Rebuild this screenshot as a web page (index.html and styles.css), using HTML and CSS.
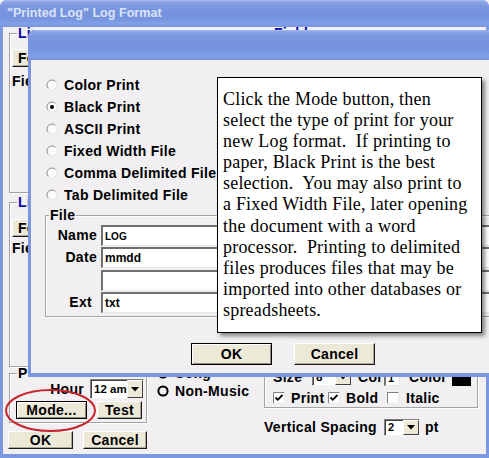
FILE: index.html
```html
<!DOCTYPE html>
<html lang="en">
<head>
<meta charset="utf-8">
<title>"Printed Log" Log Format</title>
<link rel="stylesheet" href="styles.css">
</head>
<body>
<div class="screen">
  <div class="outer">
    <div class="titlebar"><span class="title">"Printed Log" Log Format</span></div>
    <div class="outer-body">
      <div class="col-left">
        <fieldset class="grp g1">
          <legend class="blue">Lines</legend>
          <div class="btn strip-btn b-fonts1">Fonts</div>
          <div class="lbl l-fields1">Fields</div>
        </fieldset>
        <fieldset class="grp g2">
          <legend class="blue">Lines</legend>
          <div class="btn strip-btn b-fonts2">Fonts</div>
          <div class="lbl l-fields2">Fields</div>
        </fieldset>
        <fieldset class="grp g3">
          <legend>P</legend>
          <div class="hour-row">
            <span class="lbl">Hour</span>
            <div class="select hour-sel">
              <span class="sel-val">12 am</span>
              <span class="sel-btn"><svg viewBox="0 0 8 5" width="8" height="5"><path d="M0 0H8L4 4.5Z" fill="#000"/></svg></span>
            </div>
          </div>
          <div class="mode-row">
            <div class="btn def mode-btn">Mode...</div>
            <div class="btn test-btn">Test</div>
          </div>
        </fieldset>
        <div class="foot-row">
          <div class="btn foot-ok">OK</div>
          <div class="btn foot-cancel">Cancel</div>
        </div>
      </div>
      <div class="col-mid">
        <div class="orad"><svg viewBox="0 0 12 12" width="12" height="12"><circle cx="6" cy="6" r="4.6" fill="none" stroke="#000" stroke-width="2"/></svg><span>Music</span></div>
        <div class="orad"><svg viewBox="0 0 12 12" width="12" height="12"><circle cx="6" cy="6" r="4.6" fill="none" stroke="#000" stroke-width="2"/></svg><span>Song</span></div>
        <div class="orad"><svg viewBox="0 0 12 12" width="12" height="12"><circle cx="6" cy="6" r="4.6" fill="none" stroke="#000" stroke-width="2"/></svg><span>Non-Music</span></div>
      </div>
      <div class="col-right">
        <fieldset class="grp gr">
          <legend class="blue">Fields</legend>
          <div class="size-row">
            <span class="w-size">Size</span>
            <div class="select size-sel">
              <span class="sel-val">8</span>
              <span class="sel-btn"><svg viewBox="0 0 8 5" width="8" height="5"><path d="M0 0H8L4 4.5Z" fill="#000"/></svg></span>
            </div>
            <span class="w-col">Col</span>
            <div class="field col-field">1</div>
            <span class="w-color">Color</span>
            <div class="swatch"></div>
          </div>
          <div class="chk-row">
            <svg class="cb" viewBox="0 0 12 12" width="12" height="12"><rect x="0" y="0" width="12" height="12" fill="#fff"/><path d="M0.5 11.5V0.5H11.5" fill="none" stroke="#808080"/><path d="M0.5 11.5H11.5V0.5" fill="none" stroke="#e8e8e8"/><path d="M2.5 5.5L4.8 7.8L9.5 3" fill="none" stroke="#000" stroke-width="1.8"/></svg>
            <span class="w-print">Print</span>
            <svg class="cb" viewBox="0 0 12 12" width="12" height="12"><rect x="0" y="0" width="12" height="12" fill="#fff"/><path d="M0.5 11.5V0.5H11.5" fill="none" stroke="#808080"/><path d="M0.5 11.5H11.5V0.5" fill="none" stroke="#e8e8e8"/><path d="M2.5 5.5L4.8 7.8L9.5 3" fill="none" stroke="#000" stroke-width="1.8"/></svg>
            <span class="w-bold">Bold</span>
            <svg class="cb" viewBox="0 0 12 12" width="12" height="12"><rect x="0" y="0" width="12" height="12" fill="#fff"/><path d="M0.5 11.5V0.5H11.5" fill="none" stroke="#808080"/><path d="M0.5 11.5H11.5V0.5" fill="none" stroke="#e8e8e8"/></svg>
            <span class="w-italic">Italic</span>
          </div>
        </fieldset>
        <div class="vs-row">
          <span class="w-vs">Vertical Spacing</span>
          <div class="select vs-sel">
            <span class="sel-val">2</span>
            <span class="sel-btn"><svg viewBox="0 0 8 5" width="8" height="5"><path d="M0 0H8L4 4.5Z" fill="#000"/></svg></span>
          </div>
          <span class="w-pt">pt</span>
        </div>
      </div>
    </div>
  </div>

  <div class="dlg">
    <div class="dlg-title"></div>
    <div class="dlg-body">
      <div class="iradio"><svg class="rb" viewBox="0 0 12 12" width="12" height="12"><circle cx="6" cy="6" r="5" fill="#fbfbfb"/><path d="M2.46 9.54A5 5 0 0 1 9.54 2.46" fill="none" stroke="#8a8a8a"/><path d="M9.54 2.46A5 5 0 0 1 2.46 9.54" fill="none" stroke="#e4e4e4"/></svg><span>Color Print</span></div>
      <div class="iradio"><svg class="rb" viewBox="0 0 12 12" width="12" height="12"><circle cx="6" cy="6" r="5" fill="#fbfbfb"/><path d="M2.46 9.54A5 5 0 0 1 9.54 2.46" fill="none" stroke="#8a8a8a"/><path d="M9.54 2.46A5 5 0 0 1 2.46 9.54" fill="none" stroke="#e4e4e4"/><circle cx="6" cy="6" r="2" fill="#000"/></svg><span>Black Print</span></div>
      <div class="iradio"><svg class="rb" viewBox="0 0 12 12" width="12" height="12"><circle cx="6" cy="6" r="5" fill="#fbfbfb"/><path d="M2.46 9.54A5 5 0 0 1 9.54 2.46" fill="none" stroke="#8a8a8a"/><path d="M9.54 2.46A5 5 0 0 1 2.46 9.54" fill="none" stroke="#e4e4e4"/></svg><span>ASCII Print</span></div>
      <div class="iradio"><svg class="rb" viewBox="0 0 12 12" width="12" height="12"><circle cx="6" cy="6" r="5" fill="#fbfbfb"/><path d="M2.46 9.54A5 5 0 0 1 9.54 2.46" fill="none" stroke="#8a8a8a"/><path d="M9.54 2.46A5 5 0 0 1 2.46 9.54" fill="none" stroke="#e4e4e4"/></svg><span>Fixed Width File</span></div>
      <div class="iradio"><svg class="rb" viewBox="0 0 12 12" width="12" height="12"><circle cx="6" cy="6" r="5" fill="#fbfbfb"/><path d="M2.46 9.54A5 5 0 0 1 9.54 2.46" fill="none" stroke="#8a8a8a"/><path d="M9.54 2.46A5 5 0 0 1 2.46 9.54" fill="none" stroke="#e4e4e4"/></svg><span>Comma Delimited File</span></div>
      <div class="iradio"><svg class="rb" viewBox="0 0 12 12" width="12" height="12"><circle cx="6" cy="6" r="5" fill="#fbfbfb"/><path d="M2.46 9.54A5 5 0 0 1 9.54 2.46" fill="none" stroke="#8a8a8a"/><path d="M9.54 2.46A5 5 0 0 1 2.46 9.54" fill="none" stroke="#e4e4e4"/></svg><span>Tab Delimited File</span></div>

      <fieldset class="grp gfile">
        <legend>File</legend>
        <div class="file-grid">
          <span class="flab">Name</span><div class="field ffield small-caps">LOG</div>
          <span class="flab">Date</span><div class="field ffield">mmdd</div>
          <span class="flab"></span><div class="field ffield"></div>
          <span class="flab lab-ext">Ext</span><div class="field ffield">txt</div>
        </div>
      </fieldset>

      <div class="dlg-buttons">
        <div class="btn def dlg-btn">OK</div>
        <div class="btn dlg-btn">Cancel</div>
      </div>
    </div>
  </div>

  <div class="tip"><p class="tip-text">Click the Mode button, then
select the type of print for your
new Log format.  If printing to
paper, Black Print is the best
selection.  You may also print to
a Fixed Width File, later opening
the document with a word
processor.  Printing to delimited
files produces files that may be
imported into other databases or
spreadsheets.</p></div>

  <svg class="ring" viewBox="0 0 93 46" width="93" height="46"><ellipse cx="45.5" cy="22.5" rx="44.5" ry="20.5" fill="none" stroke="#c4262c" stroke-width="2"/></svg>
</div>
</body>
</html>
```

FILE: styles.css
```css
* { box-sizing: border-box; }
html, body { margin: 0; padding: 0; }
body {
  width: 489px;
  height: 458px;
  overflow: hidden;
  background: #f1eff2;
  font-family: "Liberation Sans", Arial, sans-serif;
  font-weight: bold;
  font-size: 14px;
  letter-spacing: 0.3px;
  color: #000;
}
.screen { position: relative; width: 489px; height: 458px; overflow: hidden; }

/* ---------- outer window ---------- */
.outer {
  width: 489px;
  height: 458px;
  display: flex;
  flex-direction: column;
  background: #7b97e0;
  border-radius: 7px 7px 0 0;
}
.titlebar {
  height: 27px;
  flex: none;
  display: flex;
  align-items: center;
  padding-left: 7px;
  border-radius: 7px 7px 0 0;
  background: linear-gradient(to bottom, #aabdf0 0px, #8ba4e6 2px, #7c97e0 6px, #7592dd 14px, #7794df 19px, #7fa0e8 23px, #7b97e0 27px);
}
.title { color: #dbe4f8; font-size: 12.6px; font-weight: bold; letter-spacing: 0; padding-bottom: 1px; }
.outer-body {
  flex: 1;
  margin: 0 3px 4px 3px;
  background: #f1eff2;
  display: flex;
  padding-left: 6px;
}

.grp {
  margin: 0;
  padding: 0 2px;
  min-width: 0;
  border: 1px solid #a3a3a6;
  box-shadow: 1px 1px 0 #fff, inset 1px 1px 0 #fff;
}
.grp legend {
  font-size: 14px;
  line-height: 12px;
  padding: 0 1px;
  margin-left: 5px;
}
.blue { color: #0c0ca4; }

.col-left { width: 138px; flex: none; display: flex; flex-direction: column; }
.g1 { height: 166px; }
.g2 { height: 171px; margin-top: 3px; }
.g3 { height: 56px; }
.g3 legend { margin-left: 5px; }

.btn {
  display: flex;
  align-items: center;
  justify-content: center;
  background: #ece9d8;
  border: 1px solid;
  border-color: #ffffff #1a1a1a #1a1a1a #ffffff;
  box-shadow: inset -1px -1px 0 #aca899;
  font-weight: bold;
  font-size: 14px;
  white-space: nowrap;
}
.btn.def {
  border-color: #000;
  box-shadow: inset 1px 1px 0 #fff, inset -1px -1px 0 #8f8c80;
}
.strip-btn { width: 60px; height: 18px; justify-content: flex-start; padding-left: 5px; }
.b-fonts1 { margin-top: 10px; }
.b-fonts2 { margin-top: 11px; }
.lbl { line-height: 16px; }
.l-fields1 { margin-top: 6px; }
.l-fields2 { margin-top: 3px; }

.hour-row {
  height: 20px;
  display: flex;
  align-items: center;
  justify-content: flex-end;
  padding-right: 0;
}
.hour-row .lbl { margin-right: 6px; }
.select {
  display: flex;
  background: #fff;
  border: 1px solid;
  border-color: #7f7f7f #f4f4f4 #f4f4f4 #7f7f7f;
  box-shadow: inset 1px 1px 0 #404040;
}
.sel-val {
  flex: 1;
  display: flex;
  align-items: center;
  padding-left: 3px;
  font-size: 11.5px;
  letter-spacing: 0;
}
.sel-btn {
  width: 16px;
  display: flex;
  align-items: center;
  justify-content: center;
  background: #ece9d8;
  border: 1px solid;
  border-color: #fff #404040 #404040 #fff;
}
.hour-sel { width: 54px; height: 20px; }

.mode-row { height: 18px; margin-top: 2px; display: flex; gap: 10px; padding-left: 4px; }
.mode-btn { width: 71px; height: 18px; }
.test-btn { width: 45px; height: 18px; }

.foot-row { margin-top: 8px; display: flex; gap: 10px; margin-left: -1px; }
.foot-ok { width: 65px; height: 18px; }
.foot-cancel { width: 64px; height: 18px; }

.col-mid { width: 98px; flex: none; margin-left: 10px; padding-top: 319px; }
.orad { height: 18px; display: flex; align-items: center; gap: 6px; }

.col-right { width: 214px; flex: none; margin-left: 9px; }
.gr {
  height: 381px;
  display: flex;
  flex-direction: column;
  justify-content: flex-end;
  padding-bottom: 1px;
}
.gr legend { margin-left: 6px; }
.size-row { height: 20px; margin-bottom: 3px; display: flex; align-items: center; padding-left: 6px; }
.w-size { width: 39px; }
.size-sel { width: 40px; height: 18px; }
.w-col { width: 26px; margin-left: 6px; }
.field {
  background: #fff;
  border-style: solid;
  border-width: 2px 1px 1px 2px;
  border-color: #707070 #e6e6e6 #e6e6e6 #707070;
  display: flex;
  align-items: center;
  padding-left: 2px;
  font-size: 12px;
  letter-spacing: 0;
}
.col-field { width: 16px; height: 18px; font-size: 11px; }
.w-color { width: 43px; margin-left: 9px; }
.swatch { width: 19px; height: 14px; background: #000; align-self: flex-end; margin-bottom: 1px; }

.chk-row { height: 16px; display: flex; align-items: center; padding-left: 6px; }
.cb { flex: none; }
.w-print { width: 37px; margin-left: 6px; }
.w-bold { width: 41px; margin-left: 6px; }
.w-italic { margin-left: 7px; }

.vs-row { margin-top: 11px; height: 16px; display: flex; align-items: center; }
.w-vs { width: 120px; white-space: nowrap; }
.vs-sel { width: 36px; height: 17px; }
.vs-sel .sel-val { font-size: 11px; }
.w-pt { margin-left: 5px; }

/* ---------- inner dialog ---------- */
.dlg {
  position: absolute;
  left: 28px;
  top: 30px;
  width: 510px;
  height: 347px;
  display: flex;
  flex-direction: column;
  background: #7b97e0;
  border-radius: 7px 7px 0 0;
}
.dlg-title {
  height: 30px;
  flex: none;
  border-radius: 7px 7px 0 0;
  background: linear-gradient(to bottom, #a6baf0 0px, #8aa3e6 2px, #7c97e0 6px, #7592dd 15px, #7794df 21px, #7fa1e8 26px, #7b97e0 30px);
}
.dlg-body {
  flex: 1;
  margin: 0 3px 4px 3px;
  background: #f1eff2;
  padding: 14px 0 0 15px;
}
.iradio { height: 22px; display: flex; align-items: center; }
.rb { flex: none; margin-right: 6px; }

.gfile {
  margin-top: 3px;
  margin-left: -1px;
  width: 480px;
  height: 108px;
}
.gfile legend { margin-left: 1px; }
.file-grid {
  margin-top: 4px;
  display: grid;
  grid-template-columns: 49px 1fr;
  grid-auto-rows: 21px;
  column-gap: 4px;
  row-gap: 1.3px;
}
.flab { text-align: right; line-height: 21px; }
.lab-ext { padding-right: 5px; }
.ffield { height: 21px; }
.small-caps { font-size: 10px; }

.dlg-buttons { margin-top: 26px; display: flex; gap: 22px; padding-left: 145px; }
.dlg-btn { width: 81px; height: 22px; }

/* ---------- tooltip ---------- */
.tip {
  position: absolute;
  left: 217px;
  top: 77px;
  width: 265px;
  height: 256px;
  background: #fff;
  border: 1px solid #000;
  box-shadow: 3px 3px 4px rgba(0, 0, 0, 0.45);
  padding: 11px 0 0 5px;
}
.tip-text {
  margin: 0;
  white-space: pre;
  font-family: "Liberation Serif", "Times New Roman", serif;
  font-weight: normal;
  font-size: 18px;
  line-height: 21.1px;
  letter-spacing: 0.2px;
  color: #000;
}

/* ---------- annotation ---------- */
.ring { position: absolute; left: 5px; top: 388px; }
```
